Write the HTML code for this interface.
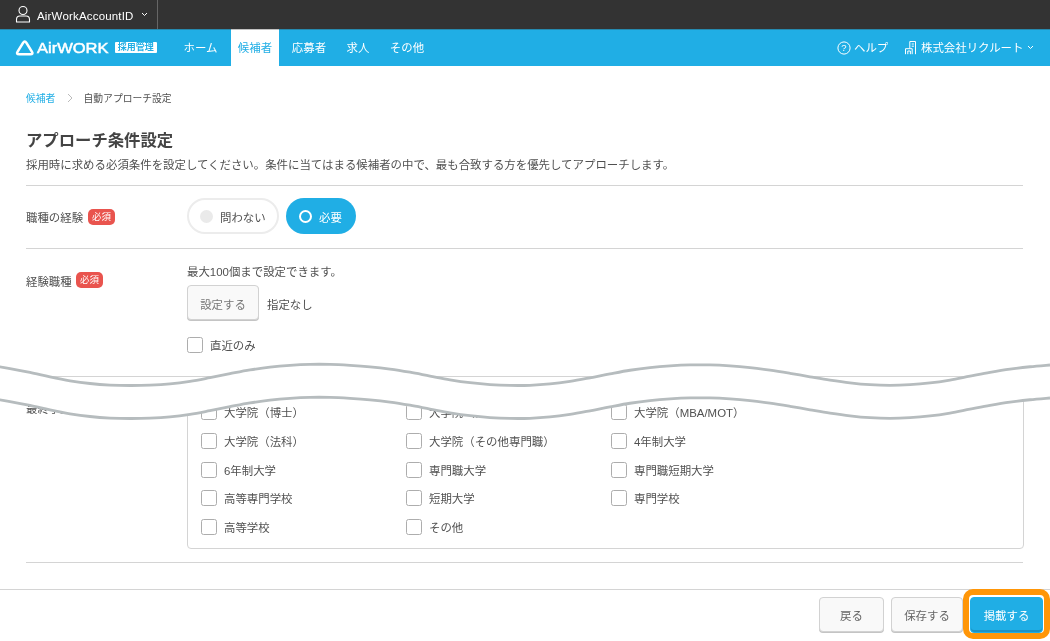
<!DOCTYPE html>
<html lang="ja">
<head>
<meta charset="utf-8">
<title>アプローチ条件設定</title>
<style>
*{box-sizing:border-box;margin:0;padding:0}
html,body{width:1050px;height:641px;overflow:hidden;background:#fff}
body{font-family:"Liberation Sans","Noto Sans CJK JP",sans-serif;color:#505050;font-size:11.43px;position:relative;will-change:transform}
.abs{position:absolute}
#topbar{left:0;top:0;width:1050px;height:29px;background:#333}
#acct{left:0;top:0;width:158px;height:29px;border-right:1px solid #666;color:#fff;font-size:11.5px;letter-spacing:0.18px;line-height:29px}
#acct span.t{position:absolute;left:37px;top:2px;white-space:nowrap}
#nav{left:0;top:29px;width:1050px;height:37px;background:#20aee5;color:#fff}
.tab{position:absolute;top:0;height:37px;line-height:39px;font-size:11.43px;white-space:nowrap;text-align:center}
.tab.on{background:#fff;color:#20aee5}
.hr{position:absolute;left:26px;width:997px;height:1px;background:#d4d4d4}
.lbl{position:absolute;left:26px;font-size:11.43px;line-height:18px;white-space:nowrap}
.req{position:absolute;width:27px;height:16px;background:#e9544e;color:#fff;font-size:9.5px;line-height:16px;text-align:center;border-radius:5px;white-space:nowrap}
.txt{position:absolute;font-size:11.43px;line-height:18px;white-space:nowrap}
.cb{position:absolute;width:16px;height:16px;border:1px solid #adadad;border-radius:2.500px;background:#fff}
.btn{position:absolute;border:1px solid #d2d2d2;border-radius:4px;background:#f9f9f9;color:#666;font-size:11.43px;text-align:center;white-space:nowrap;box-shadow:0 1px 0 #c4c4c4}
</style>
</head>
<body>
<div id="topbar" class="abs"></div>
<div id="acct" class="abs">
<svg class="abs" style="left:15px;top:5px" width="16" height="18" viewBox="0 0 16 18" fill="none" stroke="#fff" stroke-width="1.1"><circle cx="8" cy="5.5" r="4"/><path d="M1.500 17v-2.500c0-2.200 1.600-3.500 3.400-3.500h6.200c1.800 0 3.400 1.300 3.400 3.500v2.500z" stroke-linejoin="round"/></svg>
<span class="t">AirWorkAccountID</span>
<svg class="abs" style="left:141px;top:12px" width="7" height="5" viewBox="0 0 7 5" fill="none" stroke="#fff" stroke-width="1"><path d="M1 1l2.500 2.500 2.500-2.500"/></svg>
</div>
<div id="nav" class="abs">
<div class="abs" style="left:0;top:0;width:1050px;height:1px;background:#268aaf;z-index:2"></div><div class="abs" style="left:231px;top:0;width:48px;height:1px;background:#c2c2c2;z-index:3"></div>
<svg class="abs" style="left:13.900px;top:9.100px" width="21.500" height="19.350" viewBox="0 0 20 18" fill="none" stroke="#fff" stroke-width="2.400" stroke-linejoin="round"><path d="M8.420 4.550Q10 2 11.580 4.550L16.620 12.650Q18.200 15.200 15.200 15.200L4.800 15.200Q1.800 15.200 3.380 12.650Z"/></svg>
<div class="abs" style="left:37px;top:9px;font-size:15px;line-height:20px;white-space:nowrap;transform:scaleX(1.1);transform-origin:0 0;-webkit-text-stroke:0.500px #fff">AirWORK</div>
<div class="abs" style="left:114.500px;top:12.500px;width:42.500px;height:11px;background:#fff;color:#20aee5;font-size:9px;line-height:11px;font-weight:bold;text-align:center;border-radius:1px;white-space:nowrap">採用管理</div>
<div class="tab" style="left:174px;width:53px">ホーム</div>
<div class="tab on" style="left:231px;width:48px">候補者</div>
<div class="tab" style="left:285px;width:48px">応募者</div>
<div class="tab" style="left:340px;width:36px">求人</div>
<div class="tab" style="left:384px;width:46px">その他</div>
<svg class="abs" style="left:836.700px;top:11.500px" width="14" height="14" viewBox="0 0 14 14" fill="none" stroke="#fff" stroke-width="1"><circle cx="7" cy="7" r="6.100"/></svg>
<div class="abs" style="left:837px;top:12px;width:14px;height:14px;line-height:14px;font-size:9.500px;text-align:center">?</div>
<div class="abs" style="left:854px;top:1px;line-height:37px;font-size:11.43px;white-space:nowrap">ヘルプ</div>
<svg class="abs" style="left:905px;top:11.800px" width="12" height="14" viewBox="0 0 12 14" fill="none" stroke="#fff" stroke-width="1"><path d="M4.800 7.500V0.500h5.700V13.200M0.500 13.200V7.700h6.700V13.200M2.800 13.200V10h2.600V13.200M6.700 3h2.200M6.700 5.200h2.200"/></svg>
<div class="abs" style="left:921px;top:1px;line-height:37px;font-size:11.43px;white-space:nowrap">株式会社リクルート</div>
<svg class="abs" style="left:1027px;top:16px" width="7" height="5" viewBox="0 0 7 5" fill="none" stroke="#fff" stroke-width="1"><path d="M1 1l2.500 2.500 2.500-2.500"/></svg>
</div>

<div class="txt" style="left:26px;top:91.500px;font-size:9.800px;line-height:14px;color:#20aee5">候補者</div>
<svg class="abs" style="left:67px;top:93px" width="6" height="10" viewBox="0 0 6 10" fill="none" stroke="#bbb" stroke-width="1"><path d="M1 1l4 4-4 4"/></svg>
<div class="txt" style="left:83.500px;top:91.500px;font-size:9.800px;line-height:14px">自動アプローチ設定</div>

<div class="txt" style="left:26px;top:128px;font-size:16.350px;line-height:24px;font-weight:bold;color:#444">アプローチ条件設定</div>
<div class="txt" style="left:26px;top:156px">採用時に求める必須条件を設定してください。条件に当てはまる候補者の中で、最も合致する方を優先してアプローチします。</div>
<div class="hr" style="top:185px"></div>

<div class="lbl" style="top:209px">職種の経験</div><div class="req" style="left:88px;top:208.500px">必須</div>
<div class="abs" style="left:187px;top:198px;width:92px;height:36px;border:2px solid #ececec;border-radius:18px;background:#fff"></div>
<div class="abs" style="left:200px;top:210px;width:13px;height:13px;border-radius:50%;background:#eaeaea"></div>
<div class="txt" style="left:220px;top:209px">問わない</div>
<div class="abs" style="left:286px;top:198px;width:70px;height:36px;border-radius:18px;background:#20aee5"></div>
<div class="abs" style="left:299px;top:210px;width:13px;height:13px;border-radius:50%;border:2px solid #fff"></div>
<div class="txt" style="left:319px;top:209px;color:#fff">必要</div>
<div class="hr" style="top:248px"></div>

<div class="lbl" style="top:273px">経験職種</div><div class="req" style="left:76px;top:272px">必須</div>
<div class="txt" style="left:187px;top:263px">最大100個まで設定できます。</div>
<div class="btn" style="left:187px;top:285px;width:72px;height:35px;line-height:39px;color:#777">設定する</div>
<div class="txt" style="left:267px;top:296px">指定なし</div>
<div class="cb" style="left:187px;top:337px"></div>
<div class="txt" style="left:210px;top:337px">直近のみ</div>
<div class="hr" style="top:376px"></div>

<!-- lower section -->
<div class="lbl" style="top:400px">最終学歴</div>
<div class="abs" style="left:187px;top:388px;width:837px;height:161px;border:1px solid #d4d4d4;border-radius:4px;background:#fff"></div>

<div class="cb" style="left:201px;top:404px"></div><div class="txt" style="left:224px;top:404px">大学院（博士）</div>
<div class="cb" style="left:406px;top:404px"></div><div class="txt" style="left:429px;top:404px">大学院（修士）</div>
<div class="cb" style="left:611px;top:404px"></div><div class="txt" style="left:634px;top:404px">大学院（MBA/MOT）</div>

<div class="cb" style="left:201px;top:433px"></div><div class="txt" style="left:224px;top:433px">大学院（法科）</div>
<div class="cb" style="left:406px;top:433px"></div><div class="txt" style="left:429px;top:433px">大学院（その他専門職）</div>
<div class="cb" style="left:611px;top:433px"></div><div class="txt" style="left:634px;top:433px">4年制大学</div>

<div class="cb" style="left:201px;top:462px"></div><div class="txt" style="left:224px;top:462px">6年制大学</div>
<div class="cb" style="left:406px;top:462px"></div><div class="txt" style="left:429px;top:462px">専門職大学</div>
<div class="cb" style="left:611px;top:462px"></div><div class="txt" style="left:634px;top:462px">専門職短期大学</div>

<div class="cb" style="left:201px;top:490px"></div><div class="txt" style="left:224px;top:490px">高等専門学校</div>
<div class="cb" style="left:406px;top:490px"></div><div class="txt" style="left:429px;top:490px">短期大学</div>
<div class="cb" style="left:611px;top:490px"></div><div class="txt" style="left:634px;top:490px">専門学校</div>

<div class="cb" style="left:201px;top:519px"></div><div class="txt" style="left:224px;top:519px">高等学校</div>
<div class="cb" style="left:406px;top:519px"></div><div class="txt" style="left:429px;top:519px">その他</div>

<div class="hr" style="top:562px"></div>
<div class="abs" style="left:0;top:589px;width:1050px;height:1px;background:#d4d4d4"></div>

<!-- wave -->
<svg class="abs" style="left:0;top:355px" width="1050" height="75" viewBox="0 355 1050 75">
<path d="M-10.0 365.20C-6.7 365.76 3.3 367.34 10.0 368.54C16.7 369.73 23.3 370.98 30.0 372.38C36.7 373.78 43.3 375.55 50.0 376.95C56.7 378.36 63.3 379.71 70.0 380.80C76.7 381.90 83.3 382.81 90.0 383.51C96.7 384.22 103.3 384.71 110.0 385.04C116.7 385.37 123.3 385.50 130.0 385.51C136.7 385.53 143.3 385.40 150.0 385.13C156.7 384.85 163.3 384.49 170.0 383.85C176.7 383.22 183.3 382.35 190.0 381.31C196.7 380.28 203.3 378.93 210.0 377.66C216.7 376.38 223.3 374.97 230.0 373.69C236.7 372.40 243.3 371.04 250.0 369.94C256.7 368.84 263.3 367.85 270.0 367.07C276.7 366.29 283.3 365.73 290.0 365.28C296.7 364.82 303.3 364.50 310.0 364.36C316.7 364.21 323.3 364.23 330.0 364.40C336.7 364.56 343.3 364.95 350.0 365.35C356.7 365.76 363.3 366.21 370.0 366.83C376.7 367.44 383.3 368.15 390.0 369.05C396.7 369.94 403.3 371.04 410.0 372.20C416.7 373.36 423.3 374.76 430.0 376.02C436.7 377.28 443.3 378.66 450.0 379.77C456.7 380.88 463.3 381.89 470.0 382.68C476.7 383.48 483.3 384.10 490.0 384.55C496.7 385.01 503.3 385.30 510.0 385.42C516.7 385.55 523.3 385.54 530.0 385.30C536.7 385.06 543.3 384.62 550.0 383.97C556.7 383.31 563.3 382.40 570.0 381.37C576.7 380.34 583.3 379.05 590.0 377.80C596.7 376.55 603.3 375.12 610.0 373.87C616.7 372.61 623.3 371.29 630.0 370.25C636.7 369.21 643.3 368.34 650.0 367.61C656.7 366.88 663.3 366.32 670.0 365.86C676.7 365.41 683.3 365.05 690.0 364.89C696.7 364.74 703.3 364.76 710.0 364.93C716.7 365.10 723.3 365.47 730.0 365.92C736.7 366.38 743.3 366.96 750.0 367.66C756.7 368.36 763.3 369.19 770.0 370.12C776.7 371.06 783.3 372.16 790.0 373.27C796.7 374.38 803.3 375.63 810.0 376.77C816.7 377.91 823.3 379.10 830.0 380.11C836.7 381.12 843.3 382.08 850.0 382.84C856.7 383.61 863.3 384.28 870.0 384.71C876.7 385.13 883.3 385.37 890.0 385.37C896.7 385.37 903.3 385.10 910.0 384.69C916.7 384.29 923.3 383.71 930.0 382.93C936.7 382.15 943.3 381.15 950.0 380.03C956.7 378.91 963.3 377.46 970.0 376.19C976.7 374.91 983.3 373.55 990.0 372.38C996.7 371.21 1003.3 370.09 1010.0 369.15C1016.7 368.21 1023.3 367.45 1030.0 366.75C1036.7 366.06 1046.7 365.29 1050.0 365.00L1050.0 398.00C1046.7 398.29 1036.7 399.06 1030.0 399.75C1023.3 400.45 1016.7 401.21 1010.0 402.15C1003.3 403.09 996.7 404.21 990.0 405.38C983.3 406.55 976.7 407.91 970.0 409.19C963.3 410.46 956.7 411.91 950.0 413.03C943.3 414.15 936.7 415.15 930.0 415.93C923.3 416.71 916.7 417.29 910.0 417.69C903.3 418.10 896.7 418.37 890.0 418.37C883.3 418.37 876.7 418.13 870.0 417.71C863.3 417.28 856.7 416.61 850.0 415.84C843.3 415.08 836.7 414.12 830.0 413.11C823.3 412.10 816.7 410.91 810.0 409.77C803.3 408.63 796.7 407.38 790.0 406.27C783.3 405.16 776.7 404.06 770.0 403.12C763.3 402.19 756.7 401.36 750.0 400.66C743.3 399.96 736.7 399.38 730.0 398.92C723.3 398.47 716.7 398.10 710.0 397.93C703.3 397.76 696.7 397.74 690.0 397.89C683.3 398.05 676.7 398.41 670.0 398.86C663.3 399.32 656.7 399.88 650.0 400.61C643.3 401.34 636.7 402.21 630.0 403.25C623.3 404.29 616.7 405.61 610.0 406.87C603.3 408.12 596.7 409.55 590.0 410.80C583.3 412.05 576.7 413.34 570.0 414.37C563.3 415.40 556.7 416.31 550.0 416.97C543.3 417.62 536.7 418.06 530.0 418.30C523.3 418.54 516.7 418.55 510.0 418.42C503.3 418.30 496.7 418.01 490.0 417.55C483.3 417.10 476.7 416.48 470.0 415.68C463.3 414.89 456.7 413.88 450.0 412.77C443.3 411.66 436.7 410.28 430.0 409.02C423.3 407.76 416.7 406.36 410.0 405.20C403.3 404.04 396.7 402.94 390.0 402.05C383.3 401.15 376.7 400.44 370.0 399.83C363.3 399.21 356.7 398.76 350.0 398.35C343.3 397.95 336.7 397.56 330.0 397.40C323.3 397.23 316.7 397.21 310.0 397.36C303.3 397.50 296.7 397.82 290.0 398.28C283.3 398.73 276.7 399.29 270.0 400.07C263.3 400.85 256.7 401.84 250.0 402.94C243.3 404.04 236.7 405.40 230.0 406.69C223.3 407.97 216.7 409.38 210.0 410.66C203.3 411.93 196.7 413.28 190.0 414.31C183.3 415.35 176.7 416.22 170.0 416.85C163.3 417.49 156.7 417.85 150.0 418.13C143.3 418.40 136.7 418.53 130.0 418.51C123.3 418.50 116.7 418.37 110.0 418.04C103.3 417.71 96.7 417.22 90.0 416.51C83.3 415.81 76.7 414.90 70.0 413.80C63.3 412.71 56.7 411.36 50.0 409.95C43.3 408.55 36.7 406.78 30.0 405.38C23.3 403.98 16.7 402.73 10.0 401.54C3.3 400.34 -6.7 398.76 -10.0 398.20Z" fill="#fff" stroke="none"/>
<path d="M-10.0 365.20C-6.7 365.76 3.3 367.34 10.0 368.54C16.7 369.73 23.3 370.98 30.0 372.38C36.7 373.78 43.3 375.55 50.0 376.95C56.7 378.36 63.3 379.71 70.0 380.80C76.7 381.90 83.3 382.81 90.0 383.51C96.7 384.22 103.3 384.71 110.0 385.04C116.7 385.37 123.3 385.50 130.0 385.51C136.7 385.53 143.3 385.40 150.0 385.13C156.7 384.85 163.3 384.49 170.0 383.85C176.7 383.22 183.3 382.35 190.0 381.31C196.7 380.28 203.3 378.93 210.0 377.66C216.7 376.38 223.3 374.97 230.0 373.69C236.7 372.40 243.3 371.04 250.0 369.94C256.7 368.84 263.3 367.85 270.0 367.07C276.7 366.29 283.3 365.73 290.0 365.28C296.7 364.82 303.3 364.50 310.0 364.36C316.7 364.21 323.3 364.23 330.0 364.40C336.7 364.56 343.3 364.95 350.0 365.35C356.7 365.76 363.3 366.21 370.0 366.83C376.7 367.44 383.3 368.15 390.0 369.05C396.7 369.94 403.3 371.04 410.0 372.20C416.7 373.36 423.3 374.76 430.0 376.02C436.7 377.28 443.3 378.66 450.0 379.77C456.7 380.88 463.3 381.89 470.0 382.68C476.7 383.48 483.3 384.10 490.0 384.55C496.7 385.01 503.3 385.30 510.0 385.42C516.7 385.55 523.3 385.54 530.0 385.30C536.7 385.06 543.3 384.62 550.0 383.97C556.7 383.31 563.3 382.40 570.0 381.37C576.7 380.34 583.3 379.05 590.0 377.80C596.7 376.55 603.3 375.12 610.0 373.87C616.7 372.61 623.3 371.29 630.0 370.25C636.7 369.21 643.3 368.34 650.0 367.61C656.7 366.88 663.3 366.32 670.0 365.86C676.7 365.41 683.3 365.05 690.0 364.89C696.7 364.74 703.3 364.76 710.0 364.93C716.7 365.10 723.3 365.47 730.0 365.92C736.7 366.38 743.3 366.96 750.0 367.66C756.7 368.36 763.3 369.19 770.0 370.12C776.7 371.06 783.3 372.16 790.0 373.27C796.7 374.38 803.3 375.63 810.0 376.77C816.7 377.91 823.3 379.10 830.0 380.11C836.7 381.12 843.3 382.08 850.0 382.84C856.7 383.61 863.3 384.28 870.0 384.71C876.7 385.13 883.3 385.37 890.0 385.37C896.7 385.37 903.3 385.10 910.0 384.69C916.7 384.29 923.3 383.71 930.0 382.93C936.7 382.15 943.3 381.15 950.0 380.03C956.7 378.91 963.3 377.46 970.0 376.19C976.7 374.91 983.3 373.55 990.0 372.38C996.7 371.21 1003.3 370.09 1010.0 369.15C1016.7 368.21 1023.3 367.45 1030.0 366.75C1036.7 366.06 1046.7 365.29 1050.0 365.00" fill="none" stroke="#b6bcbe" stroke-width="2.800"/>
<path d="M-10.0 398.20C-6.7 398.76 3.3 400.34 10.0 401.54C16.7 402.73 23.3 403.98 30.0 405.38C36.7 406.78 43.3 408.55 50.0 409.95C56.7 411.36 63.3 412.71 70.0 413.80C76.7 414.90 83.3 415.81 90.0 416.51C96.7 417.22 103.3 417.71 110.0 418.04C116.7 418.37 123.3 418.50 130.0 418.51C136.7 418.53 143.3 418.40 150.0 418.13C156.7 417.85 163.3 417.49 170.0 416.85C176.7 416.22 183.3 415.35 190.0 414.31C196.7 413.28 203.3 411.93 210.0 410.66C216.7 409.38 223.3 407.97 230.0 406.69C236.7 405.40 243.3 404.04 250.0 402.94C256.7 401.84 263.3 400.85 270.0 400.07C276.7 399.29 283.3 398.73 290.0 398.28C296.7 397.82 303.3 397.50 310.0 397.36C316.7 397.21 323.3 397.23 330.0 397.40C336.7 397.56 343.3 397.95 350.0 398.35C356.7 398.76 363.3 399.21 370.0 399.83C376.7 400.44 383.3 401.15 390.0 402.05C396.7 402.94 403.3 404.04 410.0 405.20C416.7 406.36 423.3 407.76 430.0 409.02C436.7 410.28 443.3 411.66 450.0 412.77C456.7 413.88 463.3 414.89 470.0 415.68C476.7 416.48 483.3 417.10 490.0 417.55C496.7 418.01 503.3 418.30 510.0 418.42C516.7 418.55 523.3 418.54 530.0 418.30C536.7 418.06 543.3 417.62 550.0 416.97C556.7 416.31 563.3 415.40 570.0 414.37C576.7 413.34 583.3 412.05 590.0 410.80C596.7 409.55 603.3 408.12 610.0 406.87C616.7 405.61 623.3 404.29 630.0 403.25C636.7 402.21 643.3 401.34 650.0 400.61C656.7 399.88 663.3 399.32 670.0 398.86C676.7 398.41 683.3 398.05 690.0 397.89C696.7 397.74 703.3 397.76 710.0 397.93C716.7 398.10 723.3 398.47 730.0 398.92C736.7 399.38 743.3 399.96 750.0 400.66C756.7 401.36 763.3 402.19 770.0 403.12C776.7 404.06 783.3 405.16 790.0 406.27C796.7 407.38 803.3 408.63 810.0 409.77C816.7 410.91 823.3 412.10 830.0 413.11C836.7 414.12 843.3 415.08 850.0 415.84C856.7 416.61 863.3 417.28 870.0 417.71C876.7 418.13 883.3 418.37 890.0 418.37C896.7 418.37 903.3 418.10 910.0 417.69C916.7 417.29 923.3 416.71 930.0 415.93C936.7 415.15 943.3 414.15 950.0 413.03C956.7 411.91 963.3 410.46 970.0 409.19C976.7 407.91 983.3 406.55 990.0 405.38C996.7 404.21 1003.3 403.09 1010.0 402.15C1016.7 401.21 1023.3 400.45 1030.0 399.75C1036.7 399.06 1046.7 398.29 1050.0 398.00" fill="none" stroke="#b6bcbe" stroke-width="2.800"/>
</svg>

<div class="btn" style="left:819px;top:597px;width:65px;height:35px;line-height:37px">戻る</div>
<div class="btn" style="left:891px;top:597px;width:72px;height:35px;line-height:37px">保存する</div>
<div class="abs" style="left:963px;top:589px;width:87px;height:50px;border:6px solid #ff9608;border-radius:10px"></div>
<div class="btn" style="left:970px;top:597px;width:73px;height:36px;line-height:37px;background:#20aee5;border-color:#20aee5;color:#fff;box-shadow:inset 0 -2px 0 #1b92c4">掲載する</div>
</body>
</html>
